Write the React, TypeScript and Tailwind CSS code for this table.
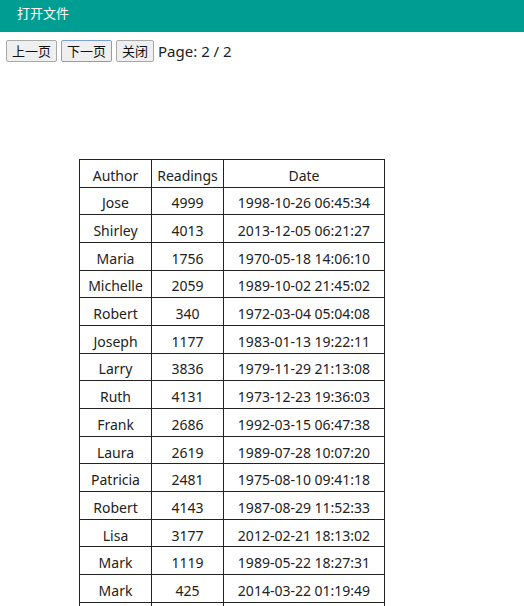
const rows: [string, number, string][] = [
  ['Jose', 4999, '1998-10-26 06:45:34'],
  ['Shirley', 4013, '2013-12-05 06:21:27'],
  ['Maria', 1756, '1970-05-18 14:06:10'],
  ['Michelle', 2059, '1989-10-02 21:45:02'],
  ['Robert', 340, '1972-03-04 05:04:08'],
  ['Joseph', 1177, '1983-01-13 19:22:11'],
  ['Larry', 3836, '1979-11-29 21:13:08'],
  ['Ruth', 4131, '1973-12-23 19:36:03'],
  ['Frank', 2686, '1992-03-15 06:47:38'],
  ['Laura', 2619, '1989-07-28 10:07:20'],
  ['Patricia', 2481, '1975-08-10 09:41:18'],
  ['Robert', 4143, '1987-08-29 11:52:33'],
  ['Lisa', 3177, '2012-02-21 18:13:02'],
  ['Mark', 1119, '1989-05-22 18:27:31'],
  ['Mark', 425, '2014-03-22 01:19:49'],
];

const btn =
  'h-[22px] rounded-[2px] border border-[#a9a9a9] bg-[#efefef] px-[5px] text-[13px] leading-none text-[#111]';

export default function App() {
  return (
    <div className="h-[606px] overflow-hidden bg-white font-['Noto_Sans','Noto_Sans_CJK_SC',sans-serif] text-[#222]">
      <div className="h-[32px] bg-[#009e92] pl-[17px] pt-[5px] text-[13px] leading-[16px] text-white">
        打开文件
      </div>
      <div className="flex items-center gap-[4px] pl-[6px] pt-[8px]">
        <button className={btn}>上一页</button>
        <button className={btn + ' !border-[#7c9fdc]'}>下一页</button>
        <button className={btn}>关闭</button>
        <span className="text-[15px] text-[#222]">Page: 2 / 2</span>
      </div>
      <div className="pl-[79px] pt-[96px]">
        <table className="border-collapse text-[14px] text-[#222]">
          <thead>
            <tr className="h-[28px]">
              <th className="w-[72px] border border-[#222] p-0 pt-[4px] text-center font-normal">Author</th>
              <th className="w-[72px] border border-[#222] p-0 pt-[4px] text-center font-normal">Readings</th>
              <th className="w-[161px] border border-[#222] p-0 pt-[4px] text-center font-normal">Date</th>
            </tr>
          </thead>
          <tbody>
            {rows.map(([name, n, date], i) => (
              <tr key={i} className="h-[27.7px]">
                <td className="border border-[#222] p-0 pt-[4px] text-center">{name}</td>
                <td className="border border-[#222] p-0 pt-[4px] text-center">{n}</td>
                <td className="border border-[#222] p-0 pt-[4px] text-center">{date}</td>
              </tr>
            ))}
            <tr className="h-[27.7px]">
              <td className="border border-[#222] p-0" />
              <td className="border border-[#222] p-0" />
              <td className="border border-[#222] p-0" />
            </tr>
          </tbody>
        </table>
      </div>
    </div>
  );
}
